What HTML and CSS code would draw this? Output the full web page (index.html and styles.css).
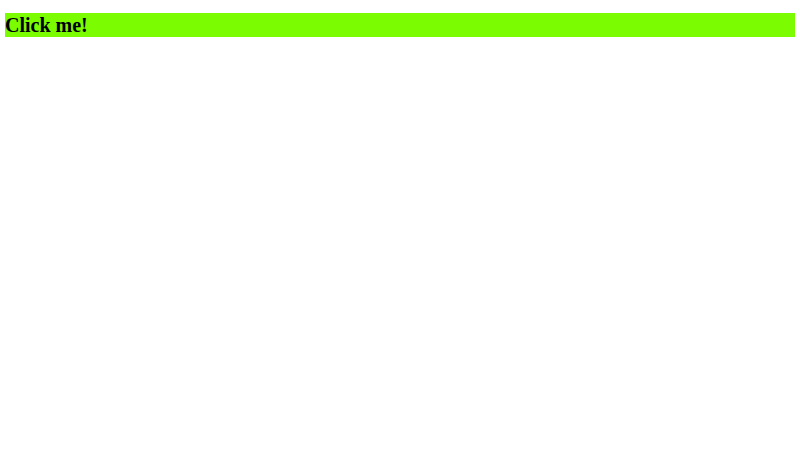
FILE: index.html
```html
<!DOCTYPE html>
<html lang="en">
<head>
  <meta charset="UTF-8">
  <meta name="viewport" content="width=device-width, initial-scale=1.0">
  <title>Click me!</title>
  <link rel="stylesheet" href="styles.css">
</head>
<body>
  <h1 class="title">Click me!</h1>
</body>
</html>
```
FILE: styles.css
```css
body {
  margin: 13px 5px;
  font-family: "Liberation Serif", "Times New Roman", serif;
  background: white;
}

.title {
  margin: 0;
  font-size: 20px;
  line-height: 24px;
  color: black;
  background-color: lawngreen;
}
```
